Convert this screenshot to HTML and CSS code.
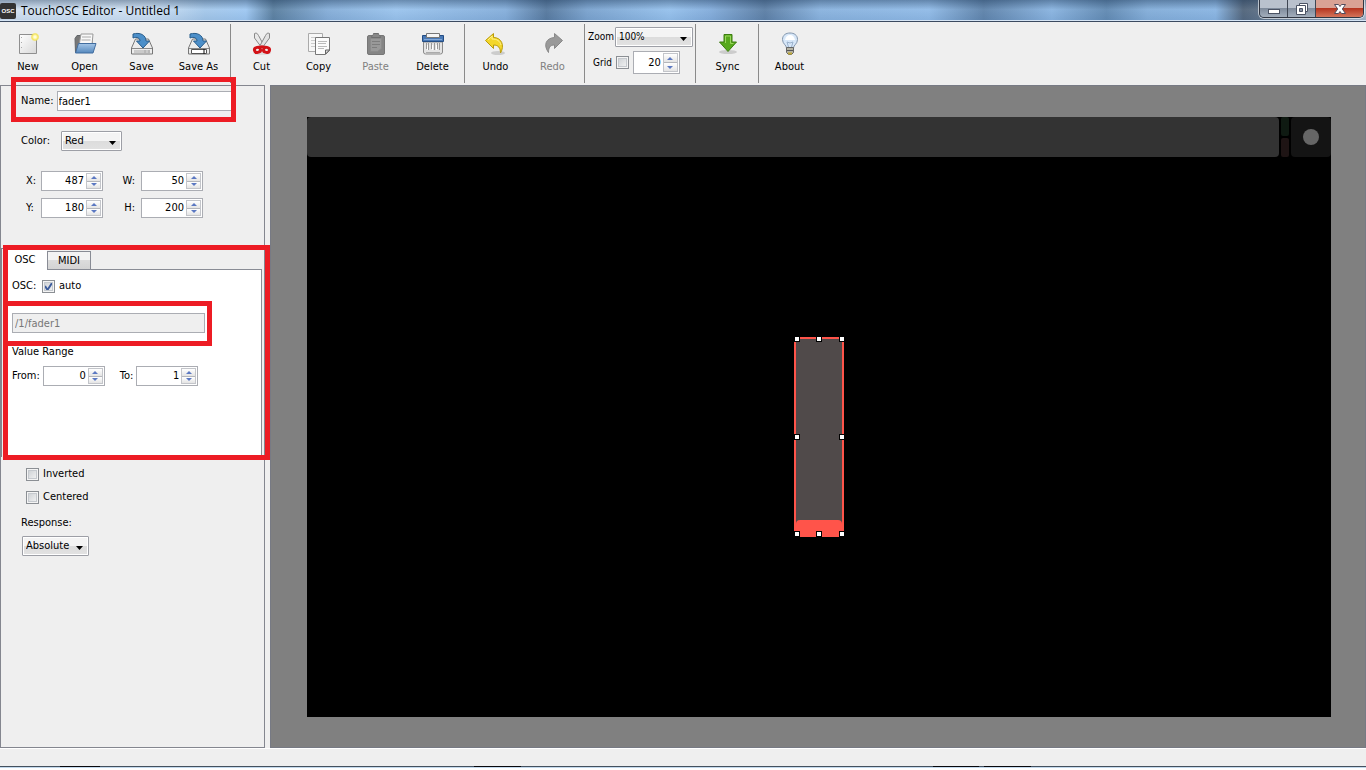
FILE: index.html
```
<!DOCTYPE html>
<html lang="en">
<head>
<meta charset="utf-8">
<title>TouchOSC Editor - Untitled 1</title>
<link rel="stylesheet" href="styles.css">
</head>
<body>
<div class="window">
  <header class="titlebar">
    <span class="app-logo">OSC</span>
    <h1 class="title">TouchOSC Editor - Untitled 1</h1>
    <div class="window-buttons">
      <button class="win-btn" aria-label="Minimize"><svg width="14" height="12" viewBox="0 0 14 12"><rect x="1.500" y="6.500" width="11" height="4" fill="#fff" stroke="#4b5364"/></svg></button>
      <button class="win-btn" aria-label="Restore"><svg width="14" height="14" viewBox="0 0 14 14"><path d="M4.500 1.500h8v8h-8z" fill="#fff" stroke="#4b5364"/><path d="M1.500 3.500h9v9h-9z" fill="#fff" stroke="#4b5364"/><path d="M4.500 6.500h3v3h-3z" fill="#8893a5" stroke="#4b5364"/></svg></button>
      <button class="win-btn close" aria-label="Close"><svg width="14" height="14" viewBox="0 0 14 14"><path d="M1.500 2.500h4L7 4.500l1.500-2h4L9.300 7l3.200 4.500h-4L7 9.500l-1.500 2h-4L4.700 7z" fill="#fff" stroke="#514b5c"/></svg></button>
    </div>
  </header>

  <nav class="toolbar" aria-label="Main">
    <div class="group">
      <button class="tool">
        <svg viewBox="0 0 24 24"><defs><linearGradient id="paper" x2="1" y2="1"><stop stop-color="#fff"/><stop offset="1" stop-color="#d8d8d8"/></linearGradient><radialGradient id="glow"><stop stop-color="#fff"/><stop offset=".35" stop-color="#fff8b0"/><stop offset=".7" stop-color="#f2e25c"/><stop offset="1" stop-color="#f2e25c" stop-opacity="0"/></radialGradient></defs><path d="M3.500 2.500h17v19h-17z" fill="url(#paper)" stroke="#8f8f8f"/><path d="M5.500 5v14" stroke="#aaa" stroke-dasharray="1 4"/><circle cx="19" cy="5" r="4.500" fill="url(#glow)"/></svg>
        New</button>
      <button class="tool">
        <svg viewBox="0 0 24 24"><defs><linearGradient id="blue" x2="0" y2="1"><stop stop-color="#a5c6e8"/><stop offset="1" stop-color="#5588bd"/></linearGradient></defs><path d="M2.500 20.500L2 6.500l2-3h5l1 2h9v6z" fill="#777" stroke="#606468"/><path d="M6 14l2-12h12l-1 11z" fill="#f8f8f8" stroke="#999"/><path d="M9 5h9M8.500 8h9" stroke="#aaa"/><path d="M5.500 11.500h17.500l-3 9.500H2.500z" fill="url(#blue)" stroke="#416d9f"/></svg>
        Open</button>
      <button class="tool">
        <svg viewBox="0 0 24 24"><path d="M5.500 7h13l4 9v6h-21v-6z" fill="#ededed" stroke="#777"/><path d="M2 16.500h20" stroke="#888"/><path d="M4 18h16v3H4z" fill="#b8b8b8"/><path d="M5 18v3m2-3v3m2-3v3m2-3v3m2-3v3m4-3v3" stroke="#ddd"/><path d="M3 2C10 0 16 3 16 9h3.500l-6.500 7-6.500-7H10C10 6 7 4.500 3 6z" fill="#4c8fc9" stroke="#275c8b"/></svg>
        Save</button>
      <button class="tool">
        <svg viewBox="0 0 24 24"><path d="M5.500 7h13l4 9v6h-21v-6z" fill="#ededed" stroke="#777"/><path d="M2 16.500h20" stroke="#888"/><path d="M4.500 17.500h15v4h-15z" fill="#fff" stroke="#555"/><path d="M17 17v5" stroke="#111" stroke-width="1"/><path d="M3 2C10 0 16 3 16 9h3.500l-6.500 7-6.500-7H10C10 6 7 4.500 3 6z" fill="#4c8fc9" stroke="#275c8b"/></svg>
        Save As</button>
    </div>
    <div class="group">
      <button class="tool">
        <svg viewBox="0 0 24 24"><ellipse cx="12" cy="21" rx="9" ry="2" fill="#ddd"/><path d="M4.500 1.500c2-1 3 0 4 2l6 11-2.500 1.500L4.500 6z" fill="#e8e8e8" stroke="#888"/><path d="M19.500 1.500c-2-1-3 0-4 2l-6 11 2.500 1.500L19.500 6z" fill="#e2e2e2" stroke="#888"/><rect x="4.500" y="15.500" width="6" height="5" rx="2.500" transform="rotate(-15 7 18)" fill="#eee" stroke="#d31217" stroke-width="3"/><rect x="13.500" y="15.500" width="6" height="5" rx="2.500" transform="rotate(15 17 18)" fill="#eee" stroke="#d31217" stroke-width="3"/><path d="M8 15.500l4-1 4 1" fill="none" stroke="#d31217" stroke-width="2.500"/></svg>
        Cut</button>
      <button class="tool">
        <svg viewBox="0 0 24 24"><path d="M1.500 1.500h14v18h-14z" fill="#f7f7f7" stroke="#aaa"/><path d="M4 5.500h9M4 8.500h6M4 11.500h5M4 14.500h5" stroke="#ccc"/><path d="M8.500 5.500h14v13l-4 4h-10z" fill="#fcfcfc" stroke="#777"/><path d="M11 9.500h9M11 11.500h8M11 14.500h9M11 16.500h6" stroke="#bbb"/><path d="M18.500 22v-4h4z" fill="#ddd" stroke="#666"/></svg>
        Copy</button>
      <button class="tool" disabled>
        <svg viewBox="0 0 24 24"><rect x="3.500" y="3.500" width="17" height="19" rx="1.500" fill="#858585" stroke="#777"/><path d="M6.500 6.500h11v10l-4 3h-7z" fill="#999" stroke="#8b8b8b"/><path d="M8 9.500h8M8 12.500h8M8 15.500h5" stroke="#7d7d7d"/><path d="M7.500 5.500c0-2 2-2 2-4h5c0 2 2 2 2 4z" fill="#888" stroke="#6f6f6f"/></svg>
        Paste</button>
      <button class="tool">
        <svg viewBox="0 0 24 24"><path d="M2.500 10h19v10q0 2-2 2h-15q-2 0-2-2z" fill="#e4e4e4" stroke="#8a8a8a"/><path d="M5.500 11v6m2-6v7m3-7v6m3-6v7m3-7v6m2-6v7" stroke="#999"/><path d="M5 20.500h14" stroke="#aaa"/><path d="M6.500 13v5m5-5v5m4-5v5" stroke="#fff"/><path d="M1.500 3.500h21v6h-21z" fill="#4979b6" stroke="#234d84"/><path d="M3 7.500h18" stroke="#83a9d8"/><path d="M5.500 1.500h13v4h-13z" fill="#f5f5f5" stroke="#777"/></svg>
        Delete</button>
    </div>
    <div class="group">
      <button class="tool">
        <svg viewBox="0 0 24 24"><ellipse cx="14" cy="21" rx="7" ry="2" fill="#ccc"/><path d="M1.500 8.500l8-7v4c8 0 11.500 8 7 15.500 0-5-2-8-7-8v3.500z" fill="#f4d72a" stroke="#b99b0b"/><path d="M4 8l4-4v3c5 0 8 2 9 6" fill="none" stroke="#fff28a"/></svg>
        Undo</button>
      <button class="tool" disabled>
        <svg viewBox="0 0 24 24"><path d="M21.500 8.500l-8-7v4C5 6 2 13 7.500 20.500c0-5 1.500-7.500 6-7.500v3.500z" fill="#999" stroke="#888"/></svg>
        Redo</button>
    </div>
    <div class="settings">
      <div class="setting"><label for="zoom">Zoom</label><select id="zoom" class="combo zoom"><option>100%</option></select></div>
      <div class="setting grid-row"><label for="grid">Grid</label><input type="checkbox" id="grid" class="check"><span class="spin"><input id="gridsize" aria-label="Grid size" value="20"><span class="arrows"><button class="up" aria-label="Increase"></button><button class="down" aria-label="Decrease"></button></span></span></div>
    </div>
    <div class="group narrow">
      <button class="tool">
        <svg viewBox="0 0 24 24"><ellipse cx="12" cy="20" rx="9" ry="2" fill="#ccc"/><path d="M8 2.500h8V10h4.500L12 19.500 3.500 10H8z" fill="#58a91d" stroke="#3c7d10"/><path d="M9.500 11V4h5v7.500h3" fill="none" stroke="#9bd65e"/></svg>
        Sync</button>
    </div>
    <div class="group narrow">
      <button class="tool">
        <svg viewBox="0 0 24 24"><path d="M8.500 16c0-3-4-4-4-8.500C4.500 3 8 1 12 1s7.500 2 7.500 6.500c0 4.500-4 5.500-4 8.500z" fill="#d7e7f8" stroke="#8396ad"/><path d="M7 8q1-5 5-5t5 5z" fill="#fff"/><path d="M10.500 15l-1.500-5 3 1 3-1-1.500 5" fill="none" stroke="#9ab1cc"/><path d="M8.500 15.500h7v5l-2 2h-3l-2-2z" fill="#b5b3a4" stroke="#666"/><path d="M9 18.500h6" stroke="#555"/><path d="M10 21.500h4" stroke="#c0aa3b" stroke-width="2"/></svg>
        About</button>
    </div>
  </nav>

  <main class="workspace">
    <aside class="panel">
      <div class="field name-row"><label for="name">Name:</label><input class="text" id="name" value="fader1"></div>
      <div class="field color-row"><label for="color">Color:</label><select class="combo color" id="color"><option>Red</option></select></div>
      <div class="geometry">
        <label for="x">X:</label><span class="spin"><input id="x" value="487"><span class="arrows"><button class="up" aria-label="Increase X"></button><button class="down" aria-label="Decrease X"></button></span></span>
        <label for="w">W:</label><span class="spin"><input id="w" value="50"><span class="arrows"><button class="up" aria-label="Increase W"></button><button class="down" aria-label="Decrease W"></button></span></span>
        <label for="y">Y:</label><span class="spin"><input id="y" value="180"><span class="arrows"><button class="up" aria-label="Increase Y"></button><button class="down" aria-label="Decrease Y"></button></span></span>
        <label for="h">H:</label><span class="spin"><input id="h" value="200"><span class="arrows"><button class="up" aria-label="Increase H"></button><button class="down" aria-label="Decrease H"></button></span></span>
      </div>
      <section class="messages">
        <div class="tabs" role="tablist"><button class="tab active" role="tab" aria-selected="true">OSC</button><button class="tab" role="tab" aria-selected="false">MIDI</button></div>
        <div class="tab-body">
          <div class="auto-row"><span>OSC:</span><input type="checkbox" class="check" id="auto" checked><label for="auto">auto</label></div>
          <input class="text address" aria-label="OSC address" value="/1/fader1" disabled>
          <p class="range-title">Value Range</p>
          <div class="range-row">
            <label for="from">From:</label><span class="spin"><input id="from" value="0"><span class="arrows"><button class="up" aria-label="Increase from"></button><button class="down" aria-label="Decrease from"></button></span></span>
            <label for="to">To:</label><span class="spin"><input id="to" value="1"><span class="arrows"><button class="up" aria-label="Increase to"></button><button class="down" aria-label="Decrease to"></button></span></span>
          </div>
        </div>
      </section>
      <div class="options">
        <div class="option"><input type="checkbox" class="check" id="inverted"><label for="inverted">Inverted</label></div>
        <div class="option"><input type="checkbox" class="check" id="centered"><label for="centered">Centered</label></div>
        <label class="response-label" for="response">Response:</label>
        <select class="combo response" id="response"><option>Absolute</option></select>
      </div>
      <div class="mark mark-name"></div>
      <div class="mark mark-messages"></div>
      <div class="mark mark-address"></div>
    </aside>
    <section class="stage" aria-label="Canvas">
      <div class="device">
        <div class="device-top"><div class="page-tab"></div><div class="leds"><i class="led in"></i><i class="led out"></i></div><div class="device-menu"><i class="dot"></i></div></div>
        <div class="fader"><div class="fader-value"></div>
          <i class="handle l t"></i><i class="handle c t"></i><i class="handle r t"></i><i class="handle l m"></i><i class="handle r m"></i><i class="handle l b"></i><i class="handle c b"></i><i class="handle r b"></i>
        </div>
      </div>
    </section>
  </main>
  <footer class="statusbar"></footer>
  <div class="frame-edge"><i class="shade first"></i><i class="shade second"></i><i class="shade third"></i><i class="shade fourth"></i></div>
</div>
</body>
</html>
```
FILE: styles.css
```
* { box-sizing: border-box; }
body { margin: 0; background: #fff; color: #000; font: 11px/14px "DejaVu Sans Condensed", "DejaVu Sans", sans-serif; }
button, input, select { font: inherit; color: inherit; margin: 0; }
.window { height: 100vh; display: flex; flex-direction: column; background: #efefef; overflow: hidden; }

.titlebar { height: 22px; flex: none; display: flex; align-items: center; gap: 5px; border-bottom: 1px solid #3c4a60; box-shadow: inset 0 -1px #d5e4f4;
  background: linear-gradient(rgba(30,55,85,.4), rgba(255,255,255,.04) 45%, rgba(60,100,150,.12)),
    linear-gradient(90deg, #d3e2f2 0, #cfe1f3 11%, #a5c8ea 15%, #9fc8f2 18%, #5b7f9f 20%, #86aed8 24%, #9bc4ed 29%, #86afdb 37%, #57799e 40%, #7ba3ce 43%, #96c1ec 49%, #84addb 52%, #5d7fa5 56%, #8ab3de 60%, #91bbe7 68%, #5f83aa 72%, #8ab4e0 77%, #628ab2 81%, #84aed9 84%, #8ab5e2 89%, #52657b 91%, #a9b9cb 100%); }
.app-logo { width: 16px; height: 16px; background: #333; border-radius: 2px; color: #fff; font: bold 6px/16px "Liberation Sans", sans-serif; text-align: center; }
.title { margin: 0; font: 12px/20px "Open Sans", sans-serif; }
.window-buttons { margin: 0 2px 3px auto; align-self: stretch; display: flex; border: 1px solid #303642; border-top: 0; border-radius: 0 0 5px 5px; box-shadow: 0 0 0 1px rgba(255,255,255,.6); overflow: hidden; }
.win-btn { width: 28px; border: 0; border-right: 1px solid #3f4653; padding: 0; display: flex; align-items: center; justify-content: center; background: linear-gradient(#b9c1cd 45%, #7c8899 45%, #a3aebc); }
.win-btn.close { width: 47px; border-right: 0; background: linear-gradient(#d9a294 45%, #b3301b 45%, #d4745a); }

.toolbar { height: 63px; flex: none; display: flex; padding: 2px 0; }
.group { display: flex; border-right: 1px solid #8a8a8a; }
.group .tool { width: 57px; }
.group:first-child { width: 231px; }
.group:first-child .tool:first-child { width: 56px; }
.group:nth-child(2) { width: 234px; padding-left: 2px; }
.group:nth-child(3) { width: 120px; padding-left: 2px; }
.group.narrow { width: 63px; padding-left: 3px; }
.group:last-child { border-right: 0; padding-left: 2px; }
.tool { flex: none; border: 0; padding: 8px 0 0; background: none; display: flex; flex-direction: column; align-items: center; gap: 4px; white-space: nowrap; }
.tool svg { width: 24px; height: 24px; }
.tool:disabled { color: #808080; }
.settings { width: 111px; border-right: 1px solid #8a8a8a; padding: 3px 2px 0 3px; }
.setting { display: flex; align-items: center; gap: 1px; font-size: 10px; }
.setting.grid-row { gap: 4px; padding: 4px 0 0 5px; }

.combo { appearance: none; height: 20px; border: 1px solid #9d9fa6; padding: 0 3px; border-radius: 1px; box-shadow: inset 0 0 0 1px #fff;
  background: url("data:image/svg+xml,%3Csvg xmlns='http://www.w3.org/2000/svg' width='7' height='4'%3E%3Cpath d='M0 0h7L3.500 4z'/%3E%3C/svg%3E") no-repeat right 5px top 9px, linear-gradient(#f4f4f4 50%, #dcdcdc 50%, #e2e2e2); }
.zoom { width: 78px; }
.color { width: 61px; }
.response { width: 67px; display: block; margin-left: 1px; }
.check { appearance: none; flex: none; width: 13px; height: 13px; border: 1px solid #8b8f94; background: linear-gradient(135deg, #c8ccd0, #f7f7f7); box-shadow: inset 0 0 0 1px #f4f4f4, inset 0 0 0 2px #c5c9ce; }
.check:checked { background: url("data:image/svg+xml,%3Csvg xmlns='http://www.w3.org/2000/svg' width='11' height='11'%3E%3Cpath d='M2 5l2.500 4L9 2' fill='none' stroke='%233d5c9c' stroke-width='2'/%3E%3C/svg%3E") no-repeat center, linear-gradient(135deg, #c8ccd0, #f7f7f7); }
.spin { display: flex; width: 62px; height: 20px; border: 1px solid #abadb3; background: #fff; padding: 1px; }
.grid-row .spin { width: 47px; height: 23px; }
.spin input { flex: 1; min-width: 0; border: 0; padding: 0 2px 0 0; background: none; text-align: right; font-size: 11px; }
.arrows { width: 15px; display: flex; flex-direction: column; border: 1px solid #c3c5ca; }
.arrows button { flex: 1; border: 0; padding: 0; min-height: 0; display: grid; place-items: center; background: linear-gradient(#fff, #e4e4e4); }
.arrows .down { border-top: 1px solid #b4b6bb; }
.arrows button::before { content: ""; border: 3px solid transparent; border-top: 0; border-bottom-color: #5b78c2; }
.arrows .down::before { border-bottom: 0; border-top: 3px solid #5b78c2; }

.workspace { flex: 1; min-height: 0; display: flex; }
.panel { position: relative; width: 265px; margin-right: 5px; flex: none; border: 1px solid #84868f; }
.text { border: 1px solid #abadb3; height: 20px; padding: 0 2px; background: #fff; min-width: 0; }
.field { display: flex; align-items: center; padding-left: 20px; }
.name-row { padding-top: 5px; gap: 3px; }
.name-row .text { width: 177px; padding-left: 1px; }
.color-row { padding-top: 20px; gap: 11px; }
.geometry { display: grid; grid-template-columns: 12px 62px 32px 62px; column-gap: 3px; row-gap: 7px; align-items: center; padding: 20px 0 0 25px; }
.geometry label:nth-of-type(even) { text-align: right; padding-right: 3px; }
.messages { margin-top: 30px; padding: 0 2px 0 1px; border-top: 1px solid #84868f; border-left: 1px solid #84868f; }
.tabs { display: flex; align-items: flex-end; height: 21px; position: relative; z-index: 1; }
.tab { height: 19px; width: 44px; border: 1px solid #898c95; padding: 0; background: linear-gradient(#f3f3f3 50%, #dcdcdc 50%, #d3d3d3); }
.tab.active { height: 22px; border: 0; background: #fff; margin-bottom: -1px; }
.tab-body { border: 1px solid #898c95; border-left: 0; border-bottom: 0; height: 188px; margin-top: -1px; background: #fff; padding: 9px; }
.auto-row { display: flex; align-items: center; gap: 4px; }
.auto-row span { width: 26px; }
.address { display: block; width: 193px; margin-top: 20px; background: #efefef; color: #777; }
.range-title { margin: 12px 0 7px; }
.range-row { display: flex; align-items: center; gap: 3px; }
.range-row label + .spin { margin-right: 12px; }
.options { padding: 10px 0 0 20px; }
.option { display: flex; align-items: center; gap: 4px; padding: 0 0 9px 5px; }
.response-label { display: block; margin: 3px 0 6px; }
.mark { position: absolute; border: 5px solid #ed1c24; pointer-events: none; z-index: 2; }
.mark-name { left: 10px; top: -9px; width: 225px; height: 45px; }
.mark-messages { left: 2px; top: 159px; width: 267px; height: 215px; }
.mark-address { left: 2px; top: 215px; width: 209px; height: 45px; }

.stage { flex: 1; min-width: 0; background: #808080; border: 1px solid #777a84; padding: 31px 34px 30px 36px; display: flex; }
.device { position: relative; flex: 1; background: #000; }
.device-top { display: flex; gap: 2px; height: 40px; }
.page-tab { flex: 1; background: #333; border-radius: 4px; }
.leds { width: 8px; display: flex; flex-direction: column; gap: 2px; }
.led { flex: 1; border-radius: 2px; }
.led.in { background: #0f1a12; }
.led.out { background: #1e1414; }
.device-menu { width: 40px; border-radius: 4px; background: #141414; display: grid; place-items: center; }
.dot { width: 16px; height: 16px; border-radius: 50%; background: #666; }
.fader { position: absolute; left: 487px; top: 220px; width: 50px; height: 200px; border: 2px solid #ff544a; border-radius: 2px; background: #504a4a; display: flex; align-items: flex-end; }
.fader-value { flex: 1; height: 15px; background: #ff544a; border-radius: 4px 4px 0 0; }
.handle { position: absolute; width: 6px; height: 6px; background: #fff; border: 1px solid #000; }
.l { left: -2px; }
.c { left: 20px; }
.r { right: -3px; }
.t { top: -3px; }
.m { top: 95px; }
.b { bottom: -2px; }

.statusbar { height: 18px; flex: none; border-top: 1px solid #fff; background: #efefef; }
.frame-edge { position: relative; height: 4px; flex: none; background: linear-gradient(#44515f 1px, #c3d9ec 1px, #c3d9ec 2px, #fff 2px); }
.shade { position: absolute; top: 0; height: 1px; background: #08080c; }
.first { left: 60px; width: 40px; }
.second { left: 474px; width: 47px; }
.third { left: 933px; width: 46px; }
.fourth { left: 984px; width: 47px; }
```
